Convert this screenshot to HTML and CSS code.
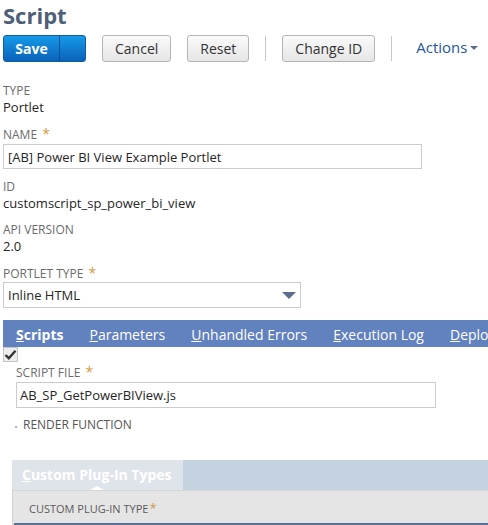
FILE: index.html
```html
<!DOCTYPE html>
<html>
<head>
<meta charset="utf-8">
<link rel="stylesheet" href="styles.css">
</head>
<body>
<div class="page">
  <h1 class="title">Script</h1>
  <div class="toolbar">
    <div class="btn-save"><span class="save-main">Save</span><span class="save-menu"></span></div>
    <button class="btn">Cancel</button>
    <button class="btn">Reset</button>
    <span class="sep"></span>
    <button class="btn">Change ID</button>
    <span class="sep"></span>
    <span class="actions">Actions<span class="caret"></span></span>
  </div>

  <div class="field">
    <div class="label">TYPE</div>
    <div class="value">Portlet</div>
  </div>
  <div class="field">
    <div class="label">NAME <span class="req">*</span></div>
    <div class="input name-input">[AB] Power BI View Example Portlet</div>
  </div>
  <div class="field">
    <div class="label">ID</div>
    <div class="value">customscript_sp_power_bi_view</div>
  </div>
  <div class="field">
    <div class="label">API VERSION</div>
    <div class="value">2.0</div>
  </div>
  <div class="field">
    <div class="label">PORTLET TYPE <span class="req">*</span></div>
    <div class="input select-input">Inline HTML<span class="select-caret"></span></div>
  </div>

  <div class="tabbar">
    <span class="tab active"><u>S</u>cripts</span>
    <span class="tab"><u>P</u>arameters</span>
    <span class="tab"><u>U</u>nhandled Errors</span>
    <span class="tab"><u>E</u>xecution Log</span>
    <span class="tab"><u>D</u>eployments</span>
  </div>
  <div class="check"><svg width="13" height="13" viewBox="0 0 13 13"><path d="M1.5 7 L4.8 10.2 L11.5 2.8" fill="none" stroke="#333" stroke-width="2.4" stroke-linejoin="miter"/></svg></div>

  <div class="subpanel">
    <div class="field">
      <div class="label">SCRIPT FILE <span class="req">*</span></div>
      <div class="input file-input">AB_SP_GetPowerBIView.js</div>
    </div>
    <div class="render"><span class="dot"></span>RENDER FUNCTION</div>
  </div>

  <div class="plugin">
    <div class="plugin-bar">
      <span class="plugin-tab"><u>C</u>ustom Plug-In Types</span>
    </div>
    <div class="plugin-body">
      <div class="plugin-label">CUSTOM PLUG-IN TYPE<span class="req">*</span></div>
      <div class="plugin-line"></div>
    </div>
  </div>
</div>
</body>
</html>
```

FILE: styles.css
```css
html, body {
  margin: 0;
  padding: 0;
  background: #ffffff;
  overflow: hidden;
}
.page {
  font-family: "Open Sans", "Liberation Sans", sans-serif;
  color: #262626;
  padding-left: 3px;
  width: 485px;
  height: 525px;
  overflow: hidden;
}
.title {
  margin: 0;
  padding-top: 1px;
  font-size: 22px;
  line-height: 28px;
  font-weight: 700;
  color: #4d5f79;
}
.toolbar {
  display: flex;
  align-items: center;
  margin-top: 6px;
  height: 27px;
}
.btn-save {
  display: flex;
  width: 83px;
  height: 27px;
  box-sizing: border-box;
  border: 1px solid #125aa8;
  border-radius: 3px;
  background: linear-gradient(#159ae8, #0a62b9);
  color: #fff;
  font-weight: 700;
  font-size: 14px;
  margin-right: 16px;
}
.save-main {
  width: 55px;
  text-align: center;
  line-height: 25px;
  border-right: 1px solid #0b4f98;
}
.save-menu {
  flex: 1;
}
.btn {
  font-family: "Open Sans", "Liberation Sans", sans-serif;
  font-size: 14px;
  color: #333;
  height: 27px;
  padding: 0 12px;
  border: 1px solid #b5b5b5;
  border-radius: 3px;
  background: linear-gradient(#fafafa, #e6e6e6);
  margin-right: 16px;
}
.sep {
  width: 1px;
  height: 25px;
  background: #c8c8c8;
  margin-right: 16px;
}
.toolbar .sep + .actions {
  margin-left: 8px;
}
.actions {
  font-size: 15px;
  color: #25579c;
  display: flex;
  align-items: center;
  margin-top: -4px;
}
.caret {
  width: 0;
  height: 0;
  border-left: 4px solid transparent;
  border-right: 4px solid transparent;
  border-top: 4px solid #5a6e8c;
  margin-left: 3px;
  margin-top: 2px;
}
.field {
  margin-top: 10px;
}
.toolbar + .field {
  margin-top: 21px;
}
.label {
  font-size: 12px;
  line-height: 15px;
  color: #6b6b6b;
}
.req {
  color: #d39b3f;
  font-size: 14px;
  margin-left: 2px;
}
.value {
  font-size: 13px;
  line-height: 18px;
  color: #262626;
}
.input {
  box-sizing: border-box;
  border: 1px solid #cccccc;
  font-size: 13px;
  color: #262626;
  padding-left: 4px;
  display: flex;
  align-items: center;
  margin-top: 2px;
}
.name-input {
  width: 419px;
  height: 25px;
}
.select-input {
  width: 298px;
  height: 26px;
  justify-content: space-between;
  padding-right: 4px;
  margin-top: 1px;
}
.select-caret {
  width: 0;
  height: 0;
  border-left: 7px solid transparent;
  border-right: 7px solid transparent;
  border-top: 7px solid #5b6e8a;
}
.tabbar {
  margin-top: 12px;
  height: 27px;
  box-sizing: border-box;
  padding-top: 2px;
  background: #6181bf;
  display: flex;
  align-items: center;
  white-space: nowrap;
  overflow: hidden;
  padding-left: 13px;
}
.tab {
  font-size: 14px;
  color: #ffffff;
  margin-right: 26px;
  position: relative;
}
.tab.active {
  font-weight: 700;
}
.tab.active::after {
  content: "";
  position: absolute;
  left: 50%;
  margin-left: -5px;
  bottom: -7px;
  border-left: 5px solid transparent;
  border-right: 5px solid transparent;
  border-bottom: 4px solid #ffffff;
}
.check {
  width: 15px;
  height: 15px;
  box-sizing: border-box;
  border: 1px solid #c4c4c4;
  background: #ededed;
  display: flex;
  align-items: center;
  justify-content: center;
}
.check svg {
  display: block;
}
.subpanel {
  padding-left: 13px;
}
.subpanel .field {
  margin-top: 2px;
}
.file-input {
  width: 420px;
  height: 26px;
  padding-left: 3px;
}
.render {
  margin-top: 9px;
  font-size: 12px;
  line-height: 15px;
  color: #555;
  display: flex;
  align-items: center;
  margin-left: -1px;
}
.dot {
  width: 2px;
  height: 2px;
  background: #b0b0b0;
  margin-right: 6px;
  margin-top: 4px;
}
.plugin {
  margin-top: 28px;
  margin-left: 9px;
}
.plugin-bar {
  height: 30px;
  background: #c5d2df;
  display: flex;
}
.plugin-tab {
  width: 171px;
  box-sizing: border-box;
  background: #dfe3ea;
  color: #ffffff;
  font-weight: 700;
  font-size: 14px;
  line-height: 30px;
  padding-left: 10px;
  position: relative;
}
.plugin-tab::after {
  content: "";
  position: absolute;
  left: 78px;
  bottom: 0;
  border-left: 7px solid transparent;
  border-right: 7px solid transparent;
  border-bottom: 4px solid #ffffff;
}
.plugin-body {
  background: #e5e5e5;
  border-left: 1px solid #cfcfcf;
  border-top: 1px solid #d5d5d5;
  height: 34px;
  position: relative;
}
.plugin-label {
  font-size: 11px;
  color: #5b5b5b;
  padding-left: 16px;
  padding-top: 10px;
  line-height: 15px;
}
.plugin-label .req {
  margin-left: 1px;
  font-size: 13px;
}
.plugin-line {
  position: absolute;
  left: 1px;
  right: 0;
  bottom: 0;
  height: 2px;
  background: #5a6f95;
}
```
